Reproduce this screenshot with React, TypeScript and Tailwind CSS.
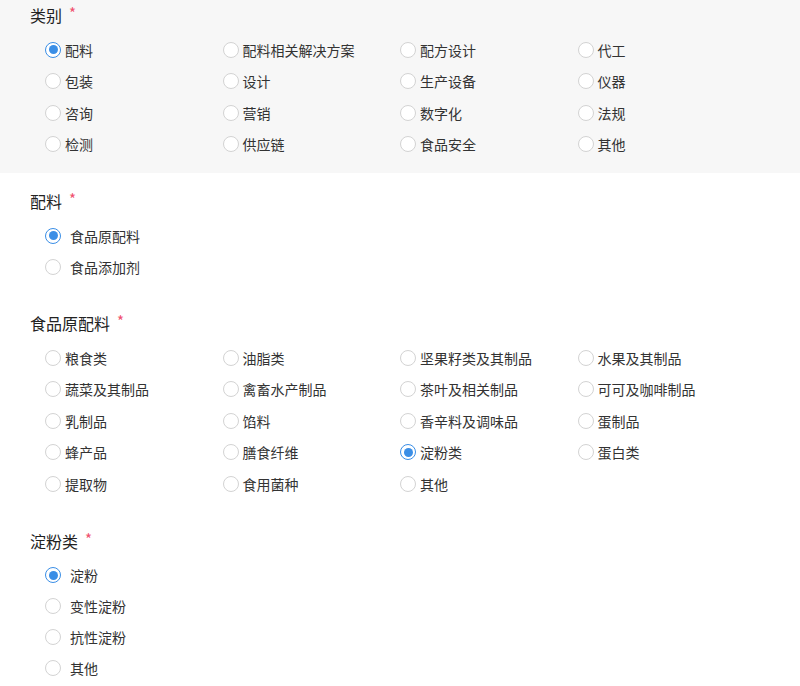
import React from "react";

type Group = {
  title: string;
  options: string[];
  checked: string;
  grid?: boolean;
  gray?: boolean;
};

const GROUPS: Group[] = [
  {
    title: "类别",
    grid: true,
    gray: true,
    checked: "配料",
    options: [
      "配料", "配料相关解决方案", "配方设计", "代工",
      "包装", "设计", "生产设备", "仪器",
      "咨询", "营销", "数字化", "法规",
      "检测", "供应链", "食品安全", "其他",
    ],
  },
  { title: "配料", checked: "食品原配料", options: ["食品原配料", "食品添加剂"] },
  {
    title: "食品原配料",
    grid: true,
    checked: "淀粉类",
    options: [
      "粮食类", "油脂类", "坚果籽类及其制品", "水果及其制品",
      "蔬菜及其制品", "禽畜水产制品", "茶叶及相关制品", "可可及咖啡制品",
      "乳制品", "馅料", "香辛料及调味品", "蛋制品",
      "蜂产品", "膳食纤维", "淀粉类", "蛋白类",
      "提取物", "食用菌种", "其他",
    ],
  },
  { title: "淀粉类", checked: "淀粉", options: ["淀粉", "变性淀粉", "抗性淀粉", "其他"] },
];

function Radio({ on }: { on: boolean }) {
  return on ? (
    <span className="w-4 h-4 rounded-full border border-[#3a8ee6] bg-white flex items-center justify-center shrink-0">
      <span className="w-[9px] h-[9px] rounded-full bg-[#3a8ee6]" />
    </span>
  ) : (
    <span className="w-4 h-4 rounded-full border border-[#d3d3d3] bg-white shrink-0" />
  );
}

function Section({ g }: { g: Group }) {
  return (
    <div className={g.gray ? "bg-[#f7f7f7] pt-[3px] pb-[13px] px-[30px]" : "px-[30px] pt-[16px] pb-[13px]"}>
      <div className="h-6 flex items-center text-base text-[#222]">
        {g.title}
        <span className="text-[#f0506e] text-[15px] ml-[7px] -mt-[3px]">*</span>
      </div>
      <div className={g.grid ? "mt-[7px] ml-[15px] w-[710px] grid grid-cols-4" : "mt-[7px] ml-[15px] flex flex-col"}>
        {g.options.map((o) => (
          <label
            key={o}
            className={"flex items-center text-sm text-[#333] " + (g.grid ? "h-[31.5px] gap-[4px]" : "h-[31px] gap-[9px]")}
          >
            <Radio on={o === g.checked} />
            <span>{o}</span>
          </label>
        ))}
      </div>
    </div>
  );
}

export default function App() {
  return (
    <div
      className="w-[800px] h-[686px] overflow-hidden bg-white flex flex-col"
      style={{ fontFamily: '"Noto Sans CJK SC", "Noto Sans", sans-serif' }}
    >
      {GROUPS.map((g) => (
        <Section key={g.title} g={g} />
      ))}
    </div>
  );
}
